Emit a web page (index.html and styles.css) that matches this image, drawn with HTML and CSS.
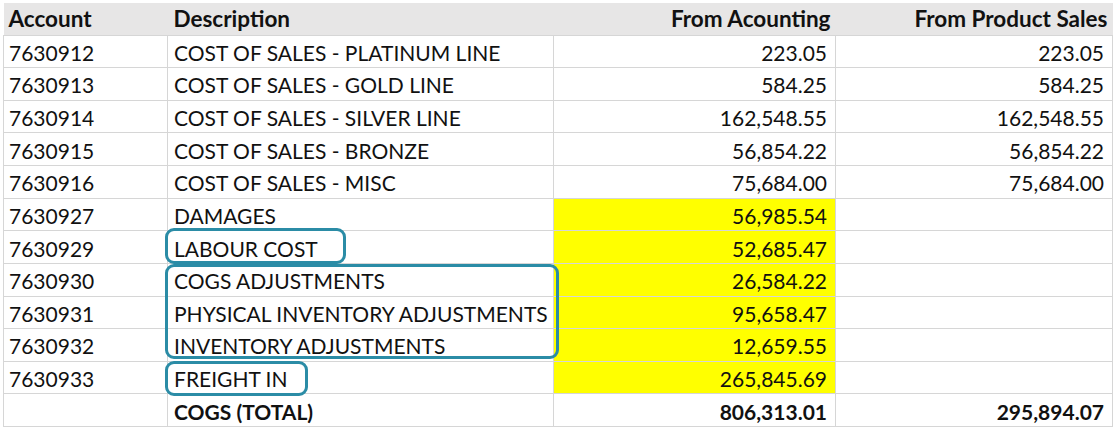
FILE: index.html
```html
<!DOCTYPE html>
<html>
<head>
<meta charset="utf-8">
<link rel="stylesheet" href="styles.css">
</head>
<body>
<div class="sheet">
  <table class="grid">
    <colgroup>
      <col class="c-acc"><col class="c-desc"><col class="c-num1"><col class="c-num2">
    </colgroup>
    <thead>
      <tr class="head">
        <th class="l">Account</th>
        <th class="l">Description</th>
        <th class="r">From Acounting</th>
        <th class="r">From Product Sales</th>
      </tr>
    </thead>
    <tbody>
      <tr><td>7630912</td><td>COST OF SALES - PLATINUM LINE</td><td class="r">223.05</td><td class="r">223.05</td></tr>
      <tr><td>7630913</td><td>COST OF SALES - GOLD LINE</td><td class="r">584.25</td><td class="r">584.25</td></tr>
      <tr><td>7630914</td><td>COST OF SALES - SILVER LINE</td><td class="r">162,548.55</td><td class="r">162,548.55</td></tr>
      <tr><td>7630915</td><td>COST OF SALES - BRONZE</td><td class="r">56,854.22</td><td class="r">56,854.22</td></tr>
      <tr><td>7630916</td><td>COST OF SALES - MISC</td><td class="r">75,684.00</td><td class="r">75,684.00</td></tr>
      <tr><td>7630927</td><td>DAMAGES</td><td class="r hl">56,985.54</td><td></td></tr>
      <tr><td>7630929</td><td>LABOUR COST</td><td class="r hl">52,685.47</td><td></td></tr>
      <tr><td>7630930</td><td>COGS ADJUSTMENTS</td><td class="r hl">26,584.22</td><td></td></tr>
      <tr><td>7630931</td><td>PHYSICAL INVENTORY ADJUSTMENTS</td><td class="r hl">95,658.47</td><td></td></tr>
      <tr><td>7630932</td><td>INVENTORY ADJUSTMENTS</td><td class="r hl">12,659.55</td><td></td></tr>
      <tr><td>7630933</td><td>FREIGHT IN</td><td class="r hl">265,845.69</td><td></td></tr>
      <tr class="total"><td></td><td class="b">COGS (TOTAL)</td><td class="r b">806,313.01</td><td class="r b">295,894.07</td></tr>
    </tbody>
  </table>
  <div class="mark mark-labour"></div>
  <div class="mark mark-adj"></div>
  <div class="mark mark-freight"></div>
</div>
</body>
</html>
```
FILE: styles.css
```css
html, body {
  margin: 0;
  padding: 0;
  background: #ffffff;
}
.sheet {
  position: relative;
  padding: 3px 0 0 3px;
  font-family: "Lato", "Liberation Sans", sans-serif;
  font-size: 21px;
  color: #111;
}
.grid {
  border-collapse: collapse;
  table-layout: fixed;
  width: 1109px;
}
.c-acc { width: 164px; }
.c-desc { width: 386px; }
.c-num1 { width: 282px; }
.c-num2 { width: 277px; }
.grid th, .grid td {
  box-sizing: border-box;
  padding: 0 8px 0 6px;
  white-space: nowrap;
  overflow: visible;
  line-height: 1;
  vertical-align: middle;
}
.grid th {
  height: 32px;
  background: #e7e6e6;
  font-weight: 700;
  font-size: 22.5px;
  border: none;
}
.grid th.r { padding-right: 5px; }
.grid th:first-child { padding-left: 5px; }
.grid td {
  height: 32.64px;
  border: 1px solid #d6d6d6;
  padding-top: 2px;
}
.grid td:first-child { padding-left: 5px; }
.l { text-align: left; }
.r { text-align: right; }
.grid td.hl { background: #ffff00; }
.grid tr.total td { border-top: 1px solid #000; height: 33px; }
.b { font-weight: 700; }
.mark {
  position: absolute;
  border: 3px solid #2b8ca6;
  border-radius: 9px;
  box-sizing: border-box;
}
.mark-labour { left: 165px; top: 228px; width: 181px; height: 36px; }
.mark-adj { left: 165px; top: 264px; width: 394px; height: 95px; }
.mark-freight { left: 165px; top: 361px; width: 143px; height: 35px; }
```
